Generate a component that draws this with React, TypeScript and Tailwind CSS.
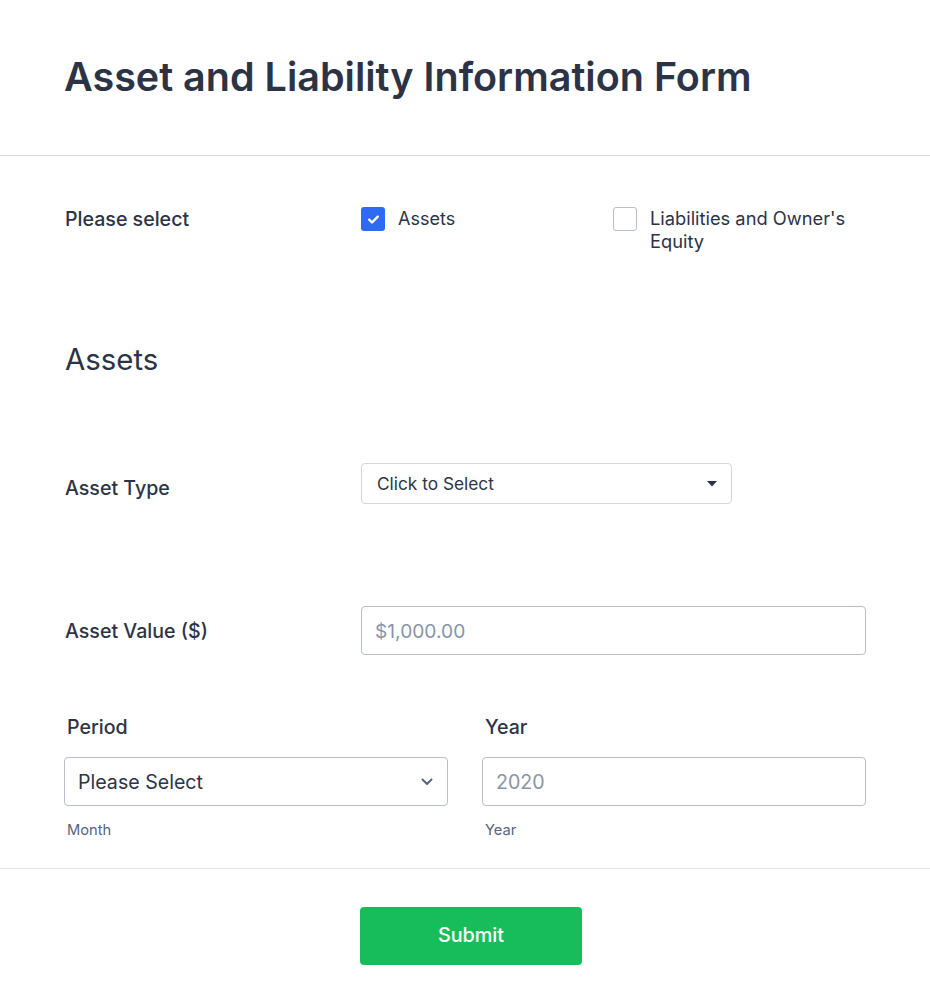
import React from "react";

export default function App() {
  return (
    <div className="w-[930px] min-h-[992px] bg-white text-[#2c3345] font-['Inter',sans-serif]">
      <div className="h-[156px] flex items-center px-[64px] border-b border-[#d8dae9]">
        <h1 className="text-[39.5px] font-semibold leading-[48px] pb-[2px]">
          Asset and Liability Information Form
        </h1>
      </div>

      <div className="px-[64px]">
        <div className="flex items-start pt-[51px]">
          <div className="w-[297px] text-[19.6px] font-medium leading-[24px] pl-[1px]">Please select</div>
          <div className="flex items-start">
            <div className="flex items-start w-[252px]">
              <span className="w-[24px] h-[24px] rounded-[3px] bg-[#2f6af4] flex items-center justify-center shrink-0">
                <svg width="15" height="15" viewBox="0 0 14 14" fill="none">
                  <path d="M3 7.2l2.6 2.6L11 4.4" stroke="white" strokeWidth="2.3" strokeLinecap="round" strokeLinejoin="round" />
                </svg>
              </span>
              <span className="ml-[13px] text-[18px] leading-[23px]">Assets</span>
            </div>
            <div className="flex items-start">
              <span className="w-[24px] h-[24px] rounded-[3px] border border-[#b8bdc9] bg-white shrink-0" />
              <span className="ml-[13px] text-[18.3px] leading-[23px] w-[215px]">Liabilities and Owner's Equity</span>
            </div>
          </div>
        </div>

        <h2 className="mt-[89px] text-[29.4px] font-normal leading-[36px] pl-[1px]">Assets</h2>

        <div className="flex items-start mt-[85px]">
          <div className="w-[297px] pt-[13px] text-[19.6px] font-medium leading-[24px] pl-[1px]">Asset Type</div>
          <div className="w-[371px] h-[41px] border border-[#d3d6df] rounded-[4px] flex items-center justify-between pl-[15px] pr-[14px]">
            <span className="text-[17.3px] leading-[20px] text-[#2c3345]">Click to Select</span>
            <svg width="10" height="6" viewBox="0 0 10 6">
              <path d="M0 0h10L5 5.5z" fill="#2c3345" />
            </svg>
          </div>
        </div>

        <div className="flex items-start mt-[102px]">
          <div className="w-[297px] pt-[13px] text-[19.6px] font-medium leading-[24px] pl-[1px]">Asset Value ($)</div>
          <div className="w-[505px] h-[49px] border border-[#b8bdc9] rounded-[4px] flex items-center px-[13px]">
            <span className="text-[19.2px] leading-[24px] text-[#8894ab]">$1,000.00</span>
          </div>
        </div>

        <div className="grid grid-cols-2 gap-x-[34px] mt-[60px]">
          <div>
            <div className="pl-[3px] text-[19.6px] font-medium leading-[24px]">Period</div>
            <div className="mt-[18px] h-[49px] border border-[#b8bdc9] rounded-[4px] flex items-center justify-between pl-[13px] pr-[14px]">
              <span className="text-[19.6px] leading-[24px]">Please Select</span>
              <svg width="12" height="8" viewBox="0 0 12 8" fill="none">
                <path d="M1.5 1.5L6 6l4.5-4.5" stroke="#57647e" strokeWidth="2" strokeLinecap="round" strokeLinejoin="round" />
              </svg>
            </div>
            <div className="pl-[3px] mt-[14px] text-[14.7px] leading-[20px] text-[#57647e]">Month</div>
          </div>
          <div>
            <div className="pl-[3px] text-[19.6px] font-medium leading-[24px]">Year</div>
            <div className="mt-[18px] h-[49px] border border-[#b8bdc9] rounded-[4px] flex items-center px-[13px]">
              <span className="text-[19.6px] leading-[24px] text-[#8894ab]">2020</span>
            </div>
            <div className="pl-[3px] mt-[14px] text-[14.7px] leading-[20px] text-[#57647e]">Year</div>
          </div>
        </div>
      </div>

      <div className="mt-[28px] border-t border-[#e3e5ee] flex justify-center pt-[38px] pb-[27px]">
        <button className="w-[222px] h-[58px] rounded-[4px] bg-[#18bd5b] text-white text-[19.8px] font-medium ml-[12px]">
          Submit
        </button>
      </div>
    </div>
  );
}
